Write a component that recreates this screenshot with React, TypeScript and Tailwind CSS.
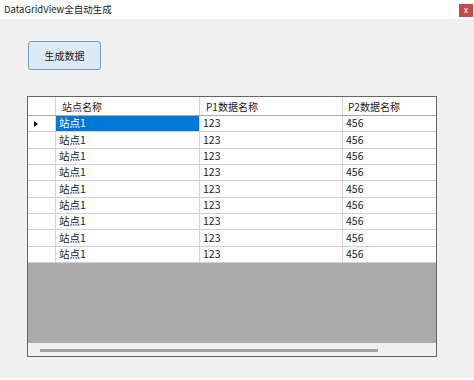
import React from 'react'

const FONT = "font-['Segoe_UI','Noto_Sans_CJK_SC','Noto_Sans',sans-serif]"

const rows = Array.from({ length: 9 }, () => ({ name: '站点1', p1: '123', p2: '456' }))

export default function App() {
  return (
    <div className={`w-[474px] h-[380px] bg-white flex flex-col text-[10.5px] text-[#1a1a1a] ${FONT}`}>
      {/* title bar */}
      <div className="h-[19px] flex items-center justify-between pl-[4px] pr-[1px] bg-white">
        <span className="text-[9.5px] leading-none text-[#222]">DataGridView全自动生成</span>
        <div className="w-[14px] h-[13px] bg-[#c9464b] flex items-center justify-center mt-[1px]">
          <span className="text-white text-[8px] leading-none -mt-[1px]">x</span>
        </div>
      </div>

      {/* form body */}
      <div className="flex-1 bg-[#f0f0f0] pl-[27px] pt-[22px] flex flex-col items-start">
        <button className="ml-[1px] w-[73px] h-[29px] rounded-[3px] border border-[#6f9cc4] bg-[#dde9f5] text-[10px] text-[#1a1a1a] flex items-center justify-center">
          生成数据
        </button>

        {/* grid */}
        <div className="mt-[26px] w-[410px] h-[261px] border border-[#646464] flex flex-col bg-[#ababab] overflow-hidden">
          <div className="h-[19px] flex bg-white border-b border-[#a8a8a8] shrink-0">
            <div className="w-[28px] border-r border-[#d4d4d4]" />
            <div className="w-[144px] border-r border-[#d4d4d4] pl-[6px] flex items-center text-[10px]">站点名称</div>
            <div className="w-[143px] border-r border-[#d4d4d4] pl-[6px] flex items-center text-[10px]">P1数据名称</div>
            <div className="flex-1 pl-[5px] flex items-center text-[10px]">P2数据名称</div>
          </div>
          {rows.map((r, i) => (
            <div key={i} className="h-[16.33px] flex bg-white border-b border-[#d0d0d0] shrink-0 leading-none">
              <div className="w-[28px] border-r border-[#d4d4d4] flex items-center pl-[6px]">
                {i === 0 && (
                  <span className="w-0 h-0 border-y-[3.5px] border-y-transparent border-l-[4px] border-l-[#111]" />
                )}
              </div>
              <div
                className={`w-[144px] border-r border-[#d4d4d4] pl-[3px] flex items-center ${
                  i === 0 ? 'bg-[#0078d7] text-white' : ''
                }`}
              >
                {r.name}
              </div>
              <div className="w-[143px] border-r border-[#d4d4d4] pl-[3px] flex items-center">{r.p1}</div>
              <div className="flex-1 pl-[3px] flex items-center">{r.p2}</div>
            </div>
          ))}
          <div className="flex-1" />
          <div className="h-[13px] bg-[#f0f0f0] shrink-0 flex items-center pl-[12px]">
            <div className="w-[338px] h-[3px] bg-[#a3a3a3] mt-[2px]" />
          </div>
        </div>
      </div>
      <div className="h-[2px] bg-white" />
    </div>
  )
}
